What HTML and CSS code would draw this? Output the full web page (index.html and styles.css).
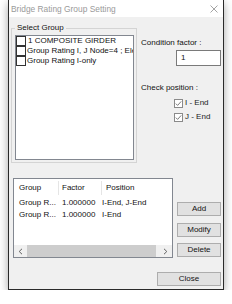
FILE: index.html
```html
<!DOCTYPE html>
<html>
<head>
<meta charset="utf-8">
<link rel="stylesheet" href="styles.css">
</head>
<body>
<div class="window">
  <div class="titlebar">
    <span class="title">Bridge Rating Group Setting</span>
    <svg class="close-x" width="8" height="8" viewBox="0 0 8 8"><path d="M0.5 0.5L7.5 7.5M7.5 0.5L0.5 7.5" stroke="#9a9a9a" stroke-width="0.9" fill="none"/></svg>
  </div>
  <div class="body">
    <div class="top">
      <fieldset class="group">
        <legend>Select Group</legend>
        <div class="listbox">
          <div class="item"><span class="cb"></span><span class="item-text">1 COMPOSITE GIRDER</span></div>
          <div class="item"><span class="cb"></span><span class="item-text">Group Rating I, J Node=4 ; Ele</span></div>
          <div class="item"><span class="cb"></span><span class="item-text">Group Rating I-only</span></div>
        </div>
      </fieldset>
      <div class="side">
        <div class="label">Condition factor :</div>
        <div class="input">1</div>
        <div class="label label-check">Check position :</div>
        <div class="checks">
          <div class="check"><span class="cb cb-on"><svg width="9" height="9" viewBox="0 0 9 9"><path d="M1.8 4.6L3.6 6.4L7.2 2.4" stroke="#6a6a6a" stroke-width="0.9" fill="none"/></svg></span>I - End</div>
          <div class="check"><span class="cb cb-on"><svg width="9" height="9" viewBox="0 0 9 9"><path d="M1.8 4.6L3.6 6.4L7.2 2.4" stroke="#6a6a6a" stroke-width="0.9" fill="none"/></svg></span>J - End</div>
        </div>
      </div>
    </div>
    <div class="bottom">
      <div class="listview">
        <div class="lv-head">
          <div class="col c1">Group</div>
          <div class="col c2">Factor</div>
          <div class="col c3">Position</div>
        </div>
        <div class="lv-row">
          <div class="col c1">Group R...</div>
          <div class="col c2">1.000000</div>
          <div class="col c3 d3">I-End, J-End</div>
        </div>
        <div class="lv-row">
          <div class="col c1">Group R...</div>
          <div class="col c2">1.000000</div>
          <div class="col c3 d3">I-End</div>
        </div>
        <div class="lv-fill"></div>
        <div class="scrollbar">
          <div class="arrow"><svg width="5" height="7" viewBox="0 0 5 7"><path d="M4 0.8L1.2 3.5L4 6.2" stroke="#606060" stroke-width="1" fill="none"/></svg></div>
          <div class="thumb"></div>
          <div class="track"></div>
          <div class="arrow"><svg width="5" height="7" viewBox="0 0 5 7"><path d="M1 0.8L3.8 3.5L1 6.2" stroke="#606060" stroke-width="1" fill="none"/></svg></div>
        </div>
      </div>
      <div class="buttons">
        <div class="btn btn-add">Add</div>
        <div class="btn btn-modify">Modify</div>
        <div class="btn btn-delete">Delete</div>
      </div>
    </div>
    <div class="footer">
      <div class="btn btn-close">Close</div>
    </div>
  </div>
</div>
</body>
</html>
```
FILE: styles.css
```css
html, body {
  margin: 0;
  padding: 0;
  background: #ffffff;
}
body {
  font-family: "Liberation Sans", Arial, sans-serif;
  font-size: 8px;
  color: #111;
}
.window {
  margin-left: 8px;
  width: 216px;
  height: 290px;
  box-sizing: border-box;
  border: 1px solid #2a2a2a;
  border-top: none;
  box-shadow: 0 3px 9px rgba(0,0,0,0.35);
  display: flex;
  flex-direction: column;
  background: #f0f0f0;
}
.titlebar {
  height: 17px;
  background: #ffffff;
  display: flex;
  align-items: center;
  justify-content: space-between;
  padding-left: 2px;
  padding-right: 5px;
}
.title {
  font-size: 8.4px;
  color: #9a9a9a;
  line-height: 10px;
}
.close-x {
  display: block;
  margin-top: 0;
}
.body {
  flex: 1;
  padding-right: 2px;
}
.top {
  display: flex;
  height: 146px;
}
.group {
  margin: 6px 0 0 2px;
  padding: 0 2px 2px 3px;
  width: 127px;
  height: 140px;
  box-sizing: border-box;
  border: 1px solid #d4d4d4;
  min-width: 0;
}
.group legend {
  padding: 0 2px;
  margin: 0;
  line-height: 10px;
  font-size: 8px;
}
.listbox {
  margin-top: 2px;
  height: 125px;
  box-sizing: border-box;
  border: 1px solid #828790;
  background: #fff;
  overflow: hidden;
}
.item {
  height: 10px;
  display: flex;
  align-items: center;
  white-space: nowrap;
  line-height: 10px;
}
.cb {
  display: inline-block;
  width: 10px;
  height: 10px;
  box-sizing: border-box;
  border: 1px solid #333;
  background: #fff;
  flex: none;
  margin-right: 1px;
}
.item:first-child .item-text {
  margin-left: 1px;
}
.side {
  margin-left: 4px;
  padding-top: 21px;
  flex: 1;
}
.label {
  line-height: 10px;
}
.input {
  margin-top: 2px;
  margin-left: 35px;
  width: 45px;
  height: 16px;
  box-sizing: border-box;
  border: 1px solid #7a7a7a;
  background: #fff;
  padding-left: 4px;
  line-height: 14px;
}
.label-check {
  margin-top: 17px;
}
.checks {
  margin-top: 3px;
  margin-left: 33px;
}
.check {
  height: 14px;
  display: flex;
  align-items: center;
  line-height: 10px;
  color: #222;
}
.cb-on {
  width: 9px;
  height: 9px;
  border-color: #8a8a8a;
  margin-right: 2px;
  position: relative;
}
.cb-on svg {
  display: block;
  margin: -1px 0 0 -1px;
}
.bottom {
  display: flex;
  margin-top: 15px;
  margin-left: 4px;
}
.listview {
  width: 160px;
  height: 80px;
  box-sizing: border-box;
  border: 1px solid #828790;
  background: #fff;
  display: flex;
  flex-direction: column;
}
.lv-head, .lv-row {
  display: flex;
  white-space: nowrap;
}
.lv-head {
  height: 18px;
  align-items: center;
}
.lv-row {
  height: 12px;
  align-items: center;
}
.col {
  line-height: 10px;
  box-sizing: border-box;
  overflow: hidden;
}
.c1 { width: 44px; padding-left: 5px; }
.c2 { width: 43px; padding-left: 4px; }
.c3 { flex: 1; padding-left: 5px; }
.lv-head .c2, .lv-head .c3 {
  border-left: 1px solid #e5e5e5;
  padding-left: 3px;
  height: 14px;
  line-height: 14px;
}
.lv-head .c3 { padding-left: 4px; }
.lv-row .c2 { padding-left: 4px; }
.d3 { padding-left: 1px; }
.lv-fill {
  flex: 1;
}
.scrollbar {
  height: 12px;
  display: flex;
  background: #f0f0f0;
}
.arrow {
  width: 13px;
  display: flex;
  align-items: center;
  justify-content: center;
}
.thumb {
  width: 129px;
  background: #cdcdcd;
}
.track {
  flex: 1;
}
.buttons {
  margin-left: 4px;
  padding-top: 24px;
  display: flex;
  flex-direction: column;
}
.btn {
  width: 44px;
  height: 14px;
  box-sizing: border-box;
  border: 1px solid #adadad;
  background: #e1e1e1;
  text-align: center;
  line-height: 12px;
  color: #111;
}
.btn-modify { margin-top: 7px; }
.btn-delete { margin-top: 6px; }
.footer {
  display: flex;
  justify-content: flex-end;
  margin-top: 14px;
}
.btn-close {
  width: 64px;
}
```
